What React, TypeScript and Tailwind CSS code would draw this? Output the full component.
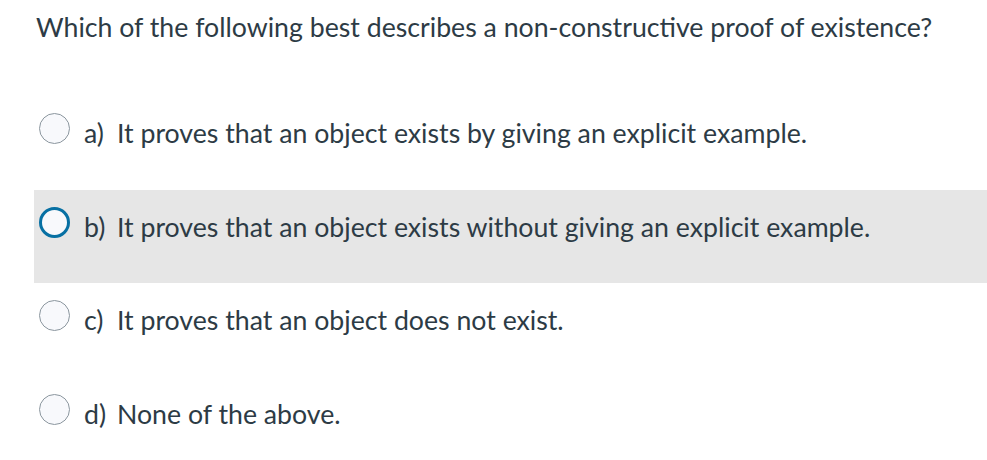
const options = [
  { key: "a)", text: "It proves that an object exists by giving an explicit example." },
  { key: "b)", text: "It proves that an object exists without giving an explicit example.", selected: true },
  { key: "c)", text: "It proves that an object does not exist." },
  { key: "d)", text: "None of the above." },
];

export default function App() {
  return (
    <div className="min-h-screen bg-white text-[#2d3b45] font-['Lato','Noto_Sans',sans-serif] overflow-hidden">
      <div className="pl-[36px] pt-[9px] h-[96px]">
        <p className="text-[26.7px] leading-[36px]">
          Which of the following best describes a non-constructive proof of existence?
        </p>
      </div>

      <div className="ml-[34px]">
        {options.map((o) => (
          <div
            key={o.key}
            className={`flex items-start h-[93.5px] pl-[5px] pt-[17px] ${o.selected ? "bg-[#e6e6e6]" : ""}`}
          >
            <span
              className={`w-[31px] h-[31px] shrink-0 rounded-full bg-[#f8f9fc] ${
                o.selected ? "border-[3px] border-[#0770a3]" : "border border-[#8b969e]"
              }`}
            />
            <label className="ml-[14px] mt-[2px] text-[26.7px] leading-[36px] flex">
              <span className="w-[33px]">{o.key}</span>
              <span>{o.text}</span>
            </label>
          </div>
        ))}
      </div>
    </div>
  );
}
